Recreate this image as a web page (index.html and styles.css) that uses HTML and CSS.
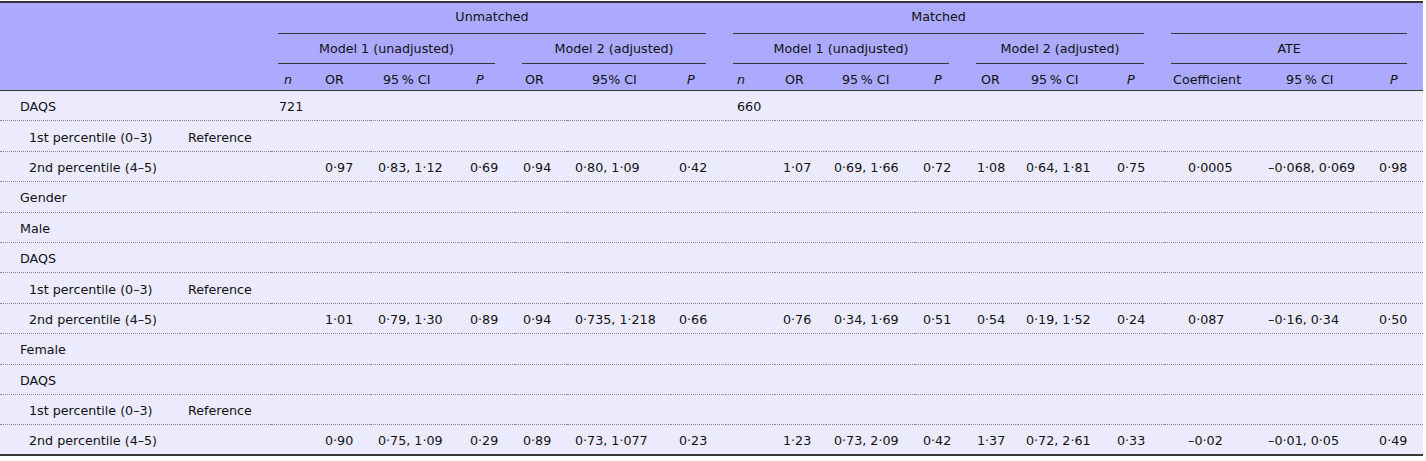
FILE: index.html
```html
<!DOCTYPE html>
<html lang="en">
<head>
<meta charset="utf-8">
<title>DAQS table</title>
<link rel="stylesheet" href="styles.css">
</head>
<body>
<table class="tbl">
  <colgroup>
    <col style="width:180px"><col style="width:91px">
    <col style="width:46px"><col style="width:53px"><col style="width:92px"><col style="width:53px">
    <col style="width:52px"><col style="width:104px"><col style="width:55px">
    <col style="width:49px"><col style="width:51px"><col style="width:89px"><col style="width:54px">
    <col style="width:49px"><col style="width:91px"><col style="width:55px">
    <col style="width:96px"><col style="width:111px"><col style="width:52px">
  </colgroup>
  <thead>
    <tr class="r1">
      <th class="stub" colspan="2" rowspan="3"></th>
      <th colspan="7"><div class="grp">Unmatched</div></th>
      <th colspan="7"><div class="grp">Matched</div></th>
      <th colspan="3"><div class="grp last">&nbsp;</div></th>
    </tr>
    <tr class="r2">
      <th colspan="4"><div class="grp">Model 1 (unadjusted)</div></th>
      <th colspan="3"><div class="grp">Model 2 (adjusted)</div></th>
      <th colspan="4"><div class="grp">Model 1 (unadjusted)</div></th>
      <th colspan="3"><div class="grp">Model 2 (adjusted)</div></th>
      <th colspan="3"><div class="grp last">ATE</div></th>
    </tr>
    <tr class="cols">
      <th><i>n</i></th>
      <th>OR</th>
      <th>95&#8201;% CI</th>
      <th><i>P</i></th>
      <th>OR</th>
      <th>95% CI</th>
      <th><i>P</i></th>
      <th><i>n</i></th>
      <th>OR</th>
      <th>95&#8201;% CI</th>
      <th><i>P</i></th>
      <th>OR</th>
      <th>95&#8201;% CI</th>
      <th><i>P</i></th>
      <th>Coefficient</th>
      <th>95&#8201;% CI</th>
      <th><i>P</i></th>
    </tr>
  </thead>
  <tbody>
    <tr><td>DAQS</td><td></td><td>721</td><td></td><td></td><td></td><td></td><td></td><td></td><td>660</td><td></td><td></td><td></td><td></td><td></td><td></td><td></td><td></td><td></td></tr>
    <tr><td class="ind">1st percentile (0–3)</td><td>Reference</td><td></td><td></td><td></td><td></td><td></td><td></td><td></td><td></td><td></td><td></td><td></td><td></td><td></td><td></td><td></td><td></td><td></td></tr>
    <tr><td class="ind">2nd percentile (4–5)</td><td></td><td></td><td>0·97</td><td>0·83, 1·12</td><td>0·69</td><td>0·94</td><td>0·80, 1·09</td><td>0·42</td><td></td><td>1·07</td><td>0·69, 1·66</td><td>0·72</td><td>1·08</td><td>0·64, 1·81</td><td>0·75</td><td>0·0005</td><td>–0·068, 0·069</td><td>0·98</td></tr>
    <tr><td>Gender</td><td></td><td></td><td></td><td></td><td></td><td></td><td></td><td></td><td></td><td></td><td></td><td></td><td></td><td></td><td></td><td></td><td></td><td></td></tr>
    <tr><td>Male</td><td></td><td></td><td></td><td></td><td></td><td></td><td></td><td></td><td></td><td></td><td></td><td></td><td></td><td></td><td></td><td></td><td></td><td></td></tr>
    <tr><td>DAQS</td><td></td><td></td><td></td><td></td><td></td><td></td><td></td><td></td><td></td><td></td><td></td><td></td><td></td><td></td><td></td><td></td><td></td><td></td></tr>
    <tr><td class="ind">1st percentile (0–3)</td><td>Reference</td><td></td><td></td><td></td><td></td><td></td><td></td><td></td><td></td><td></td><td></td><td></td><td></td><td></td><td></td><td></td><td></td><td></td></tr>
    <tr><td class="ind">2nd percentile (4–5)</td><td></td><td></td><td>1·01</td><td>0·79, 1·30</td><td>0·89</td><td>0·94</td><td>0·735, 1·218</td><td>0·66</td><td></td><td>0·76</td><td>0·34, 1·69</td><td>0·51</td><td>0·54</td><td>0·19, 1·52</td><td>0·24</td><td>0·087</td><td>–0·16, 0·34</td><td>0·50</td></tr>
    <tr><td>Female</td><td></td><td></td><td></td><td></td><td></td><td></td><td></td><td></td><td></td><td></td><td></td><td></td><td></td><td></td><td></td><td></td><td></td><td></td></tr>
    <tr><td>DAQS</td><td></td><td></td><td></td><td></td><td></td><td></td><td></td><td></td><td></td><td></td><td></td><td></td><td></td><td></td><td></td><td></td><td></td><td></td></tr>
    <tr><td class="ind">1st percentile (0–3)</td><td>Reference</td><td></td><td></td><td></td><td></td><td></td><td></td><td></td><td></td><td></td><td></td><td></td><td></td><td></td><td></td><td></td><td></td><td></td></tr>
    <tr class="end"><td class="ind">2nd percentile (4–5)</td><td></td><td></td><td>0·90</td><td>0·75, 1·09</td><td>0·29</td><td>0·89</td><td>0·73, 1·077</td><td>0·23</td><td></td><td>1·23</td><td>0·73, 2·09</td><td>0·42</td><td>1·37</td><td>0·72, 2·61</td><td>0·33</td><td>–0·02</td><td>–0·01, 0·05</td><td>0·49</td></tr>
  </tbody>
</table>
</body>
</html>
```

FILE: styles.css
```css
html, body {
  margin: 0;
  padding: 0;
  background: #ffffff;
}

body {
  font-family: "DejaVu Sans", "Liberation Sans", sans-serif;
  font-size: 12.7px;
  color: #111111;
}

.tbl {
  margin-top: 1px;
  width: 1423px;
  table-layout: fixed;
  border-collapse: separate;
  border-spacing: 0;
  border-top: 2px solid #363636;
}

.tbl th {
  background: #acaaff;
  font-weight: normal;
  padding: 0;
  line-height: 16px;
  white-space: nowrap;
}

.grp {
  margin: 0 20px 0 7px;
  border-bottom: 1px solid #363636;
  text-align: center;
}

.grp.last {
  margin-right: 16px;
}

.r1 .grp {
  padding: 6px 0 8px;
}

.r2 .grp {
  padding: 7px 0 6px;
}

.stub {
  border-bottom: 1px solid #363636;
}

.cols th {
  text-align: left;
  padding: 8px 0 2px;
  border-bottom: 1px solid #363636;
}

.cols th:nth-child(1) { padding-left: 13px; }
.cols th:nth-child(2) { padding-left: 8px; }
.cols th:nth-child(3) { padding-left: 13px; }
.cols th:nth-child(4) { padding-left: 14px; }
.cols th:nth-child(5) { padding-left: 10px; }
.cols th:nth-child(6) { padding-left: 25px; }
.cols th:nth-child(7) { padding-left: 16px; }
.cols th:nth-child(8) { padding-left: 11px; }
.cols th:nth-child(9) { padding-left: 10px; }
.cols th:nth-child(10) { padding-left: 16px; }
.cols th:nth-child(11) { padding-left: 19px; }
.cols th:nth-child(12) { padding-left: 12px; }
.cols th:nth-child(13) { padding-left: 13px; }
.cols th:nth-child(14) { padding-left: 18px; }
.cols th:nth-child(15) { padding-left: 9px; }
.cols th:nth-child(16) { padding-left: 26px; }
.cols th:nth-child(17) { padding-left: 19px; }

.tbl td {
  box-sizing: border-box;
  height: 30.4px;
  padding: 3px 0 0 8px;
  line-height: 16px;
  background: #ebebfd;
  border-bottom: 1px dotted #8a8a8a;
  white-space: nowrap;
  vertical-align: middle;
}

.tbl td:first-child {
  padding-left: 20px;
}

.tbl td.ind {
  padding-left: 29px;
}

.tbl td:nth-child(10) {
  padding-left: 11px;
}

.tbl td:nth-child(17) {
  padding-left: 24px;
}

.tbl tr.end td {
  border-bottom: 2px solid #363636;
}
```
